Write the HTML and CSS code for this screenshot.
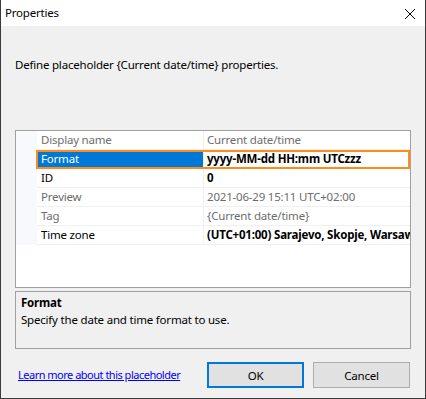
FILE: index.html
```html
<!DOCTYPE html>
<html>
<head>
<meta charset="utf-8">
<link rel="stylesheet" href="styles.css">
</head>
<body>
<div class="window">
  <div class="titlebar">
    <span class="title">Properties</span>
    <svg class="close" width="12" height="12" viewBox="0 0 12 12"><path d="M1 1 L11 11 M11 1 L1 11" stroke="#000" stroke-width="1" fill="none"/></svg>
  </div>
  <div class="content">
    <p class="intro">Define placeholder {Current date/time} properties.</p>
    <div class="grid">
      <div class="row">
        <div class="margin"></div>
        <div class="cells">
          <div class="name ro">Display name</div>
          <div class="value ro">Current date/time</div>
        </div>
      </div>
      <div class="row">
        <div class="margin"></div>
        <div class="cells selected">
          <div class="name">Format</div>
          <div class="value bold">yyyy-MM-dd HH:mm UTCzzz</div>
        </div>
      </div>
      <div class="row">
        <div class="margin"></div>
        <div class="cells">
          <div class="name">ID</div>
          <div class="value bold">0</div>
        </div>
      </div>
      <div class="row">
        <div class="margin"></div>
        <div class="cells">
          <div class="name ro">Preview</div>
          <div class="value ro">2021-06-29 15:11 UTC+02:00</div>
        </div>
      </div>
      <div class="row">
        <div class="margin"></div>
        <div class="cells">
          <div class="name ro">Tag</div>
          <div class="value ro">{Current date/time}</div>
        </div>
      </div>
      <div class="row">
        <div class="margin"></div>
        <div class="cells">
          <div class="name">Time zone</div>
          <div class="value bold">(UTC+01:00) Sarajevo, Skopje, Warsaw, Zagreb</div>
        </div>
      </div>
    </div>
    <div class="desc">
      <div class="desc-title">Format</div>
      <div class="desc-text">Specify the date and time format to use.</div>
    </div>
    <div class="footer">
      <a class="link" href="#">Learn more about this placeholder</a>
      <div class="buttons">
        <button class="btn default">OK</button>
        <button class="btn">Cancel</button>
      </div>
    </div>
  </div>
</div>
</body>
</html>
```

FILE: styles.css
```css
html, body {
  margin: 0;
  padding: 0;
}
body {
  font-family: "Noto Sans", "Open Sans", sans-serif;
  font-size: 11.5px;
  letter-spacing: -0.2px;
  color: #000;
}
.window {
  width: 426px;
  height: 399px;
  box-sizing: border-box;
  border: 1px solid #3a3a3a;
  border-top: none;
  background: #f0f0f0;
  display: flex;
  flex-direction: column;
  overflow: hidden;
}
.titlebar {
  height: 26px;
  flex: none;
  background: #fff;
  display: flex;
  align-items: center;
  justify-content: space-between;
  padding: 0 9px 0 4px;
}
.title {
  line-height: 16px;
}
.close {
  display: block;
  margin-top: 2px;
}
.content {
  padding: 0 14px;
  display: flex;
  flex-direction: column;
}
.intro {
  margin: 31px 0 0 0;
  line-height: 16px;
  padding-left: 0;
}
.grid {
  margin-top: 57px;
  height: 158px;
  box-sizing: border-box;
  border: 1px solid #a0a0a0;
  background: #fff;
  overflow: hidden;
}
.row {
  display: flex;
  height: 19px;
}
.margin {
  width: 21px;
  flex: none;
  background: #f7f9fc;
}
.cells {
  flex: 1;
  display: flex;
  border-bottom: 1px solid #f0f0f0;
  position: relative;
  min-width: 0;
}
.name {
  width: 167px;
  flex: none;
  box-sizing: border-box;
  padding-left: 4px;
  border-right: 1px solid #f0f0f0;
  line-height: 18px;
  white-space: nowrap;
}
.value {
  flex: 1;
  padding-left: 3px;
  line-height: 18px;
  white-space: nowrap;
  overflow: hidden;
}
.ro {
  color: #6d6d6d;
}
.bold {
  font-weight: bold;
}
.selected .name {
  background: #0078d7;
  color: #fff;
}
.selected::after {
  content: "";
  position: absolute;
  left: -1px;
  top: 0;
  right: 0;
  bottom: -1px;
  border: 2px solid #ff8c1a;
  pointer-events: none;
}
.desc {
  margin-top: 3px;
  height: 58px;
  box-sizing: border-box;
  border: 1px solid #a0a0a0;
  padding: 2px 5px;
  background: #f0f0f0;
}
.desc-title {
  font-weight: bold;
  line-height: 17px;
}
.desc-text {
  line-height: 18px;
}
.footer {
  margin-top: 13px;
  display: flex;
  align-items: center;
  justify-content: space-between;
}
.link {
  color: #0000ff;
  text-decoration: underline;
  margin-left: 3px;
  line-height: 16px;
  white-space: nowrap;
  font-size: 11px;
  letter-spacing: -0.5px;
}
.buttons {
  display: flex;
  gap: 9px;
  margin-right: 1px;
}
.btn {
  font-family: "Noto Sans", "Open Sans", sans-serif;
  font-size: 11.5px;
  letter-spacing: -0.2px;
  width: 97px;
  height: 26px;
  box-sizing: border-box;
  background: #e1e1e1;
  border: 1px solid #adadad;
  padding: 0;
  color: #000;
}
.btn.default {
  border: 2px solid #0078d7;
}
```
